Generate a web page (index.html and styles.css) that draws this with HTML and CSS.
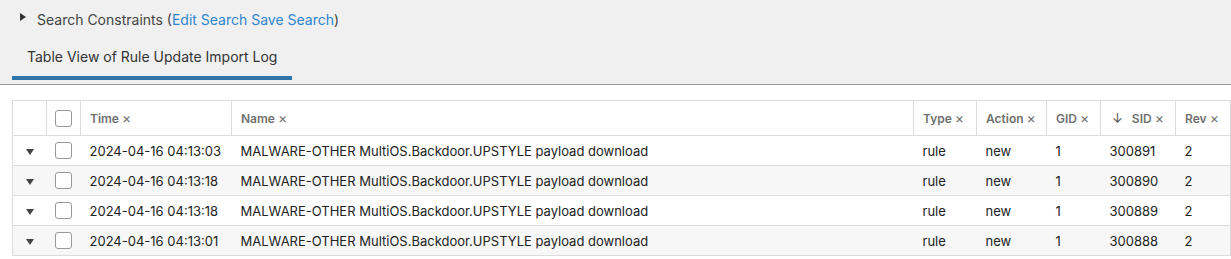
FILE: index.html
```html
<!DOCTYPE html>
<html lang="en">
<head>
    <meta charset="UTF-8">
    <title>Rule Update Import Log</title>
    <link rel="stylesheet" href="styles.css">
</head>
<body>
    <div class="top-bar">
        <div class="constraints">
            <span class="caret-right"></span>
            <span>Search Constraints (<a href="#">Edit Search</a> <a href="#">Save Search</a>)</span>
        </div>
        <div class="tabs">
            <div class="tab active">Table View of Rule Update Import Log</div>
        </div>
    </div>

    <div class="table-wrap">
        <table class="log-table">
            <colgroup>
                <col style="width: 34px">
                <col style="width: 34px">
                <col style="width: 151px">
                <col style="width: 682px">
                <col style="width: 63px">
                <col style="width: 70px">
                <col style="width: 54px">
                <col style="width: 75px">
                <col>
            </colgroup>
            <thead>
                <tr>
                    <th></th>
                    <th class="center"><span class="checkbox"></span></th>
                    <th>Time <span class="x">&times;</span></th>
                    <th>Name <span class="x">&times;</span></th>
                    <th>Type <span class="x">&times;</span></th>
                    <th>Action <span class="x">&times;</span></th>
                    <th>GID <span class="x">&times;</span></th>
                    <th><span class="sort">&#8595;</span>SID <span class="x">&times;</span></th>
                    <th>Rev <span class="x">&times;</span></th>
                </tr>
            </thead>
            <tbody>
                <tr>
                    <td class="center"><span class="caret-down"></span></td>
                    <td class="center"><span class="checkbox"></span></td>
                    <td>2024-04-16 04:13:03</td>
                    <td>MALWARE-OTHER MultiOS.Backdoor.UPSTYLE payload download</td>
                    <td>rule</td>
                    <td>new</td>
                    <td>1</td>
                    <td>300891</td>
                    <td>2</td>
                </tr>
                <tr>
                    <td class="center"><span class="caret-down"></span></td>
                    <td class="center"><span class="checkbox"></span></td>
                    <td>2024-04-16 04:13:18</td>
                    <td>MALWARE-OTHER MultiOS.Backdoor.UPSTYLE payload download</td>
                    <td>rule</td>
                    <td>new</td>
                    <td>1</td>
                    <td>300890</td>
                    <td>2</td>
                </tr>
                <tr>
                    <td class="center"><span class="caret-down"></span></td>
                    <td class="center"><span class="checkbox"></span></td>
                    <td>2024-04-16 04:13:18</td>
                    <td>MALWARE-OTHER MultiOS.Backdoor.UPSTYLE payload download</td>
                    <td>rule</td>
                    <td>new</td>
                    <td>1</td>
                    <td>300889</td>
                    <td>2</td>
                </tr>
                <tr>
                    <td class="center"><span class="caret-down"></span></td>
                    <td class="center"><span class="checkbox"></span></td>
                    <td>2024-04-16 04:13:01</td>
                    <td>MALWARE-OTHER MultiOS.Backdoor.UPSTYLE payload download</td>
                    <td>rule</td>
                    <td>new</td>
                    <td>1</td>
                    <td>300888</td>
                    <td>2</td>
                </tr>
            </tbody>
        </table>
    </div>
</body>
</html>
```

FILE: styles.css
```css
* {
    margin: 0;
    padding: 0;
    box-sizing: border-box;
}

body {
    font-family: Inter, "Liberation Sans", Arial, sans-serif;
    background: white;
    color: #222;
    height: 259px;
    overflow: hidden;
}

.top-bar {
    background: #f0f0f0;
    border-bottom: 1px solid #9a9a9a;
    height: 85px;
    padding-left: 12px;
}

.constraints {
    display: flex;
    align-items: center;
    gap: 11px;
    height: 38px;
    padding-left: 8px;
    font-size: 14px;
    color: #444;
}

.constraints a {
    color: #2e86d1;
    text-decoration: none;
}

.caret-right {
    width: 0;
    height: 0;
    border-top: 4px solid transparent;
    border-bottom: 4px solid transparent;
    border-left: 6px solid #333;
    margin-top: -4px;
}

.tabs {
    display: flex;
}

.tab {
    font-size: 14px;
    color: #333;
    padding: 10px 15px 0;
    height: 42px;
}

.tab.active {
    border-bottom: 4px solid #2f73a9;
}

.table-wrap {
    padding: 15px 0 0 12px;
}

.log-table {
    width: 1219px;
    border-collapse: collapse;
    table-layout: fixed;
    font-size: 13px;
}

.log-table th,
.log-table td {
    border: 1px solid #dcdcdc;
    text-align: left;
    padding: 0 0 0 9px;
    white-space: nowrap;
    overflow: hidden;
}

.log-table tbody td {
    border-left: none;
    border-right: none;
    height: 30px;
    color: #222;
}

.log-table tbody td:first-child {
    border-left: 1px solid #dcdcdc;
}

.log-table tbody td:last-child {
    border-right: 1px solid #dcdcdc;
}

.log-table th {
    height: 35px;
    font-size: 12px;
    font-weight: 600;
    color: #707070;
}

.log-table tbody tr:nth-child(even) {
    background: #f7f7f7;
}

.log-table .center {
    text-align: center;
    padding: 0;
}

.x {
    font-weight: normal;
    font-size: 14px;
    line-height: 1;
}

.sort {
    display: inline-block;
    font-weight: normal;
    font-size: 13px;
    color: #555;
    margin: 0 9px 0 2px;
}

.checkbox {
    display: inline-block;
    width: 17px;
    height: 17px;
    border: 1px solid #999;
    border-radius: 3px;
    background: white;
    vertical-align: middle;
}

.caret-down {
    display: inline-block;
    width: 0;
    height: 0;
    border-left: 4px solid transparent;
    border-right: 4px solid transparent;
    border-top: 6px solid #444;
    vertical-align: middle;
}
```
